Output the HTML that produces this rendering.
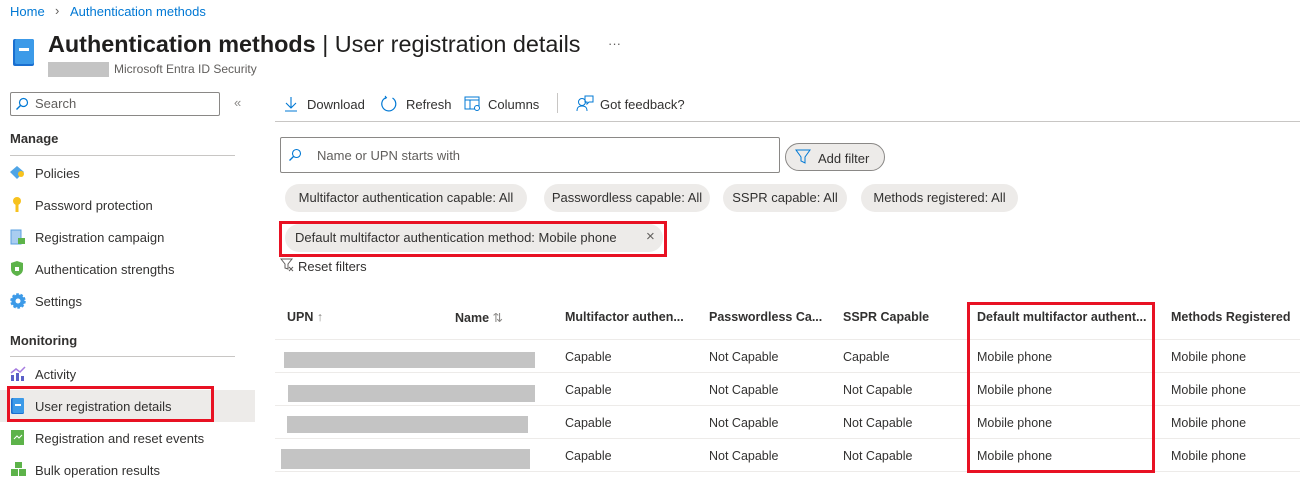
<!DOCTYPE html>
<html><head><meta charset="utf-8"><style>
*{margin:0;padding:0;box-sizing:border-box}
body{width:1300px;height:476px;overflow:hidden;background:#fff;font-family:"Liberation Sans",sans-serif;font-size:13px;color:#323130;position:relative}
.a{position:absolute;white-space:nowrap}
.pill{position:absolute;background:#edebe9;border-radius:14px;height:28px;line-height:28px;padding:0 10px;font-size:13px;color:#323130;text-align:center;white-space:nowrap;overflow:hidden}
.pc{padding:0}
.gr{position:absolute;background:#c4c4c4}
.hl{position:absolute;height:1px;background:#edebe9}
.rb{position:absolute;border:3px solid #e81123}
.th{position:absolute;top:310px;font-weight:bold;font-size:12.5px;color:#323130}
.td{position:absolute;font-size:12.5px;color:#323130}
</style></head><body>
<div class="a" style="left:10px;top:4px;color:#0078d4">Home</div>
<div class="a" style="left:55px;top:3px;color:#605e5c">›</div>
<div class="a" style="left:70px;top:4px;color:#0078d4">Authentication methods</div>
<svg class="a" style="left:12px;top:38px" width="24" height="30"><rect x="1" y="1" width="21" height="27" rx="2" fill="#1a6fd0"/><rect x="3" y="1" width="19" height="25" rx="2" fill="#3c9ae8"/><rect x="7" y="10" width="10" height="3" fill="#fff"/></svg>
<div class="a" style="left:48px;top:31px;font-size:23.4px;font-weight:bold;color:#201f1e">Authentication methods <span style="font-weight:normal">| User registration details</span></div>
<div class="a" style="left:608px;top:36px;color:#605e5c">···</div>
<div class="gr" style="left:48px;top:62px;width:61px;height:15px"></div>
<div class="a" style="left:114px;top:62px;font-size:12px;color:#605e5c">Microsoft Entra ID Security</div>
<div class="a" style="left:10px;top:92px;width:210px;height:24px;border:1px solid #8a8886;border-radius:2px"></div>
<svg class="a" style="left:15px;top:97px" width="14" height="14"><circle cx="8.5" cy="5.5" r="4" fill="none" stroke="#0078d4" stroke-width="1.2"/><line x1="5.5" y1="8.5" x2="1.5" y2="12.5" stroke="#0078d4" stroke-width="1.4"/></svg>
<div class="a" style="left:35px;top:96px;color:#605e5c">Search</div>
<div class="a" style="left:234px;top:95px;color:#8a8886">«</div>
<div class="a" style="left:10px;top:131px;font-weight:bold">Manage</div>
<div class="a" style="left:10px;top:155px;width:225px;height:1px;background:#c8c6c4"></div>
<svg class="a" style="left:10px;top:166px" width="16" height="14"><path d="M7 0L14 6L7 13L0 6Z" fill="#50a5e6"/><circle cx="11" cy="8" r="3" fill="#f7c21e"/></svg>
<div class="a" style="left:35px;top:166px">Policies</div>
<svg class="a" style="left:11px;top:197px" width="12" height="16"><circle cx="6" cy="4" r="4" fill="#f7c21e"/><rect x="4.5" y="6" width="3" height="9" fill="#f7c21e"/></svg>
<div class="a" style="left:35px;top:198px">Password protection</div>
<svg class="a" style="left:10px;top:229px" width="16" height="16"><rect x="1" y="1" width="10" height="14" fill="#a9cdf0" stroke="#5ba0e0"/><rect x="8" y="9" width="7" height="6" fill="#5db34a"/></svg>
<div class="a" style="left:35px;top:230px">Registration campaign</div>
<svg class="a" style="left:10px;top:261px" width="14" height="16"><path d="M7 0L13 2V8C13 12 10 14 7 15C4 14 1 12 1 8V2Z" fill="#5db34a"/><rect x="5" y="6" width="4" height="4" fill="#fff"/></svg>
<div class="a" style="left:35px;top:262px">Authentication strengths</div>
<svg class="a" style="left:10px;top:293px" width="16" height="16"><circle cx="8" cy="8" r="6.5" fill="#3c9ae8" stroke="#3c9ae8" stroke-width="2.5" stroke-dasharray="2.5 1.6"/><circle cx="8" cy="8" r="2.5" fill="#fff"/></svg>
<div class="a" style="left:35px;top:294px">Settings</div>
<div class="a" style="left:10px;top:333px;font-weight:bold">Monitoring</div>
<div class="a" style="left:10px;top:356px;width:225px;height:1px;background:#c8c6c4"></div>
<svg class="a" style="left:10px;top:366px" width="16" height="16"><rect x="1" y="9" width="3" height="6" fill="#5b5fc7"/><rect x="6" y="7" width="3" height="8" fill="#5b5fc7"/><rect x="11" y="10" width="3" height="5" fill="#5b5fc7"/><path d="M1 7L6 3L10 6L15 1" stroke="#a67ce0" fill="none" stroke-width="1.5"/></svg>
<div class="a" style="left:35px;top:367px">Activity</div>
<div class="a" style="left:0;top:390px;width:255px;height:32px;background:#edebe9"></div>
<div class="rb" style="left:7px;top:386px;width:207px;height:36px"></div>
<svg class="a" style="left:11px;top:398px" width="14" height="16"><rect x="0" y="0" width="13" height="16" rx="1.5" fill="#1a6fd0"/><rect x="1.5" y="0" width="11.5" height="15" rx="1.5" fill="#3c9ae8"/><rect x="4" y="6" width="6" height="2" fill="#fff"/></svg>
<div class="a" style="left:35px;top:399px">User registration details</div>
<svg class="a" style="left:11px;top:430px" width="14" height="16"><rect x="0" y="0" width="13" height="15" fill="#5db34a"/><path d="M3 9L6 6L8 8L11 5" stroke="#fff" fill="none"/></svg>
<div class="a" style="left:35px;top:431px">Registration and reset events</div>
<svg class="a" style="left:10px;top:461px" width="18" height="16"><rect x="5" y="1" width="7" height="6" fill="#5db34a"/><rect x="1" y="8" width="7" height="7" fill="#5db34a"/><rect x="9" y="8" width="7" height="7" fill="#5db34a"/></svg>
<div class="a" style="left:35px;top:463px">Bulk operation results</div>

<svg class="a" style="left:284px;top:96px" width="14" height="16"><path d="M7 1V12M2 7L7 12L12 7M1 15H13" stroke="#0078d4" fill="none" stroke-width="1.1"/></svg>
<div class="a" style="left:307px;top:97px">Download</div>
<svg class="a" style="left:380px;top:95px" width="18" height="18"><path d="M12.5 3A7 7 0 1 1 6 2.5" stroke="#0078d4" fill="none" stroke-width="1.2"/><path d="M5 1L6.5 2.8L4.5 4" stroke="#0078d4" fill="none"/></svg>
<div class="a" style="left:406px;top:97px">Refresh</div>
<svg class="a" style="left:464px;top:96px" width="18" height="16"><rect x="1" y="1" width="14" height="12" fill="none" stroke="#0078d4"/><line x1="1" y1="4" x2="15" y2="4" stroke="#0078d4"/><line x1="6" y1="4" x2="6" y2="13" stroke="#0078d4"/><circle cx="13" cy="12" r="2.5" fill="#fff" stroke="#0078d4"/></svg>
<div class="a" style="left:488px;top:97px">Columns</div>
<div class="a" style="left:557px;top:93px;width:1px;height:20px;background:#c8c6c4"></div>
<svg class="a" style="left:576px;top:95px" width="18" height="18"><circle cx="6" cy="7" r="3.5" fill="none" stroke="#0078d4"/><path d="M1 16C1 12 3 11 6 11C9 11 11 12 11 16" stroke="#0078d4" fill="none"/><path d="M9 1H17V7H13L11 9V7H9Z" fill="none" stroke="#0078d4"/></svg>
<div class="a" style="left:600px;top:97px">Got feedback?</div>
<div class="a" style="left:275px;top:121px;width:1025px;height:1px;background:#c8c6c4"></div>

<div class="a" style="left:280px;top:137px;width:500px;height:36px;border:1px solid #8a8886;border-radius:2px"></div>
<svg class="a" style="left:288px;top:148px" width="14" height="14"><circle cx="8.5" cy="5.5" r="4" fill="none" stroke="#0078d4" stroke-width="1.1"/><line x1="5.5" y1="8.5" x2="1.5" y2="12.5" stroke="#0078d4" stroke-width="1.3"/></svg>
<div class="a" style="left:317px;top:148px;color:#605e5c">Name or UPN starts with</div>
<div class="a" style="left:785px;top:143px;width:100px;height:28px;border:1px solid #8a8886;border-radius:14px;background:#edebe9"></div>
<svg class="a" style="left:795px;top:149px" width="16" height="16"><path d="M1 1H15L10 8V14L6 12V8Z" fill="none" stroke="#0078d4"/></svg>
<div class="a" style="left:818px;top:151px">Add filter</div>
<div class="pill pc" style="left:285px;top:184px;width:242px">Multifactor authentication capable: All</div>
<div class="pill pc" style="left:544px;top:184px;width:166px">Passwordless capable: All</div>
<div class="pill pc" style="left:723px;top:184px;width:124px">SSPR capable: All</div>
<div class="pill pc" style="left:861px;top:184px;width:157px">Methods registered: All</div>
<div class="rb" style="left:279px;top:221px;width:388px;height:36px"></div>
<div class="pill" style="left:285px;top:224px;width:378px;text-align:left">Default multifactor authentication method: Mobile phone</div>
<div class="a" style="left:646px;top:228px;font-size:15px;color:#605e5c">×</div>
<svg class="a" style="left:280px;top:258px" width="14" height="14"><path d="M1 1H12L8 6V11L5 10V6Z" fill="none" stroke="#605e5c"/><path d="M9 9L13 13M13 9L9 13" stroke="#605e5c"/></svg>
<div class="a" style="left:298px;top:259px">Reset filters</div>

<div class="th" style="left:287px">UPN <span style="font-weight:normal;color:#8a8886">↑</span></div>
<div class="th" style="left:455px">Name <span style="font-weight:normal;color:#8a8886">⇅</span></div>
<div class="th" style="left:565px">Multifactor authen...</div>
<div class="th" style="left:709px">Passwordless Ca...</div>
<div class="th" style="left:843px">SSPR Capable</div>
<div class="th" style="left:977px">Default multifactor authent...</div>
<div class="th" style="left:1171px">Methods Registered</div>
<div class="hl" style="left:275px;top:339px;width:1025px"></div>
<div class="hl" style="left:275px;top:372px;width:1025px"></div>
<div class="hl" style="left:275px;top:405px;width:1025px"></div>
<div class="hl" style="left:275px;top:438px;width:1025px"></div>
<div class="hl" style="left:275px;top:471px;width:1025px"></div>
<div class="gr" style="left:284px;top:352px;width:251px;height:16px"></div>
<div class="gr" style="left:288px;top:385px;width:247px;height:17px"></div>
<div class="gr" style="left:287px;top:416px;width:241px;height:17px"></div>
<div class="gr" style="left:281px;top:449px;width:249px;height:20px"></div>
<div class="td" style="left:565px;top:350px">Capable</div><div class="td" style="left:709px;top:350px">Not Capable</div><div class="td" style="left:843px;top:350px">Capable</div><div class="td" style="left:977px;top:350px">Mobile phone</div><div class="td" style="left:1171px;top:350px">Mobile phone</div>
<div class="td" style="left:565px;top:383px">Capable</div><div class="td" style="left:709px;top:383px">Not Capable</div><div class="td" style="left:843px;top:383px">Not Capable</div><div class="td" style="left:977px;top:383px">Mobile phone</div><div class="td" style="left:1171px;top:383px">Mobile phone</div>
<div class="td" style="left:565px;top:416px">Capable</div><div class="td" style="left:709px;top:416px">Not Capable</div><div class="td" style="left:843px;top:416px">Not Capable</div><div class="td" style="left:977px;top:416px">Mobile phone</div><div class="td" style="left:1171px;top:416px">Mobile phone</div>
<div class="td" style="left:565px;top:449px">Capable</div><div class="td" style="left:709px;top:449px">Not Capable</div><div class="td" style="left:843px;top:449px">Not Capable</div><div class="td" style="left:977px;top:449px">Mobile phone</div><div class="td" style="left:1171px;top:449px">Mobile phone</div>
<div class="rb" style="left:967px;top:302px;width:188px;height:171px"></div>
</body></html>
